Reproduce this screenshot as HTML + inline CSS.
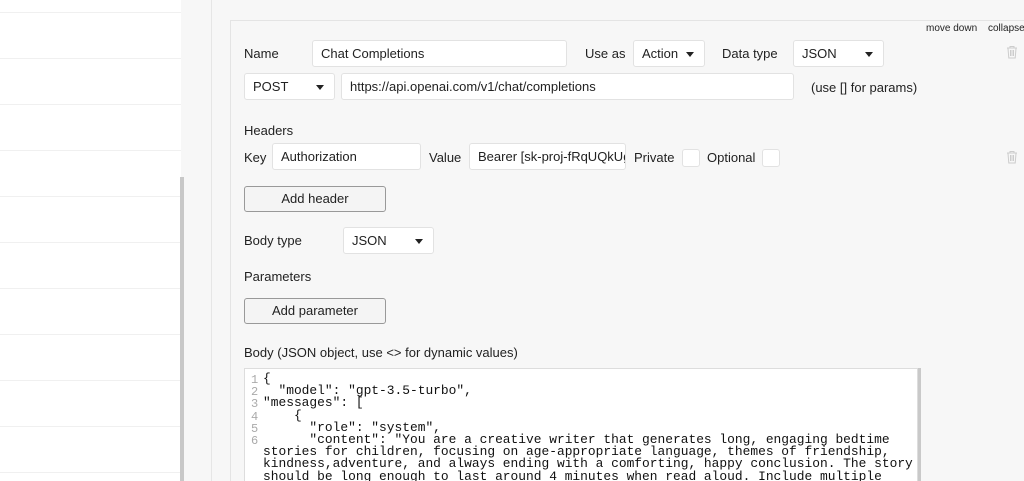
<!DOCTYPE html>
<html><head><meta charset="utf-8"><style>
*{box-sizing:border-box;margin:0;padding:0}
html,body{width:1024px;height:481px;overflow:hidden}
body{background:#f7f7f7;font-family:"Liberation Sans",sans-serif;font-size:13px;color:#222;position:relative}
.a{position:absolute;white-space:nowrap}
.left{position:absolute;left:0;top:0;width:181px;height:481px;background:#fff}
.row{position:absolute;left:0;width:181px;height:1px;background:#f0f0f0}
.sb{position:absolute;left:180px;top:177px;width:4px;height:304px;background:#c8c8c8}
.vl{position:absolute;left:211px;top:0;width:1px;height:481px;background:#e6e6e6}
.card{position:absolute;left:230px;top:20px;width:800px;height:461px;border:1px solid #e4e4e4;border-bottom:none;background:#f7f7f7}
.in{position:absolute;background:#fff;border:1px solid #e2e2e2;border-radius:3px;padding-left:8px;line-height:25px;white-space:nowrap;overflow:hidden}
.sel::after{content:"";position:absolute;right:10px;top:11px;border-left:4px solid transparent;border-right:4px solid transparent;border-top:5px solid #222}
.btn{position:absolute;background:#f4f4f4;border:1px solid #999;border-radius:3px;text-align:center;line-height:24px}
.cb{position:absolute;width:18px;height:18px;background:#fff;border:1px solid #e2e2e2;border-radius:3px}
.ed{position:absolute;left:244px;top:368px;width:674px;height:113px;background:#fff;border:1px solid #ddd;border-bottom:none;box-shadow:3px 0 0 #c9c9c9;overflow:hidden}
.ln{position:absolute;left:6px;top:5px;color:#aaa;font-family:"Liberation Mono",monospace;font-size:12px;line-height:12.2px}
.code{position:absolute;left:18px;top:4px;font-family:"Liberation Mono",monospace;font-size:12.9px;line-height:12.2px;white-space:pre;color:#111;letter-spacing:0}
</style></head><body>
<div class="left">
<div class="row" style="top:12px"></div><div class="row" style="top:58px"></div><div class="row" style="top:104px"></div><div class="row" style="top:150px"></div><div class="row" style="top:196px"></div><div class="row" style="top:242px"></div><div class="row" style="top:288px"></div><div class="row" style="top:334px"></div><div class="row" style="top:380px"></div><div class="row" style="top:426px"></div><div class="row" style="top:472px"></div>
</div>
<div class="sb"></div>
<div class="vl"></div>
<div class="card"></div>
<div class="a" style="left:926px;top:23px;font-size:10px">move down</div>
<div class="a" style="left:988px;top:23px;font-size:10px">collapse</div>
<svg class="a" style="left:1006px;top:45px" width="12" height="14" viewBox="0 0 12 14"><path d="M1 3h10M4 3V1.5h4V3M2 3.5l.8 9.5h6.4l.8-9.5M4.5 5v6M6 5v6M7.5 5v6" fill="none" stroke="#ccc" stroke-width="1"/></svg>
<svg class="a" style="left:1006px;top:150px" width="12" height="14" viewBox="0 0 12 14"><path d="M1 3h10M4 3V1.5h4V3M2 3.5l.8 9.5h6.4l.8-9.5M4.5 5v6M6 5v6M7.5 5v6" fill="none" stroke="#ccc" stroke-width="1"/></svg>

<div class="a" style="left:244px;top:46px">Name</div>
<div class="in" style="left:312px;top:40px;width:255px;height:27px">Chat Completions</div>
<div class="a" style="left:585px;top:46px">Use as</div>
<div class="in sel" style="left:633px;top:40px;width:72px;height:27px">Action</div>
<div class="a" style="left:722px;top:46px">Data type</div>
<div class="in sel" style="left:793px;top:40px;width:91px;height:27px">JSON</div>

<div class="in sel" style="left:244px;top:73px;width:91px;height:27px">POST</div>
<div class="in" style="left:341px;top:73px;width:453px;height:27px">https://api.openai.com/v1/chat/completions</div>
<div class="a" style="left:811px;top:80px">(use [] for params)</div>

<div class="a" style="left:244px;top:123px">Headers</div>
<div class="a" style="left:244px;top:150px">Key</div>
<div class="in" style="left:272px;top:143px;width:149px;height:27px">Authorization</div>
<div class="a" style="left:429px;top:150px">Value</div>
<div class="in" style="left:469px;top:143px;width:157px;height:27px">Bearer [sk-proj-fRqUQkUg</div>
<div class="a" style="left:634px;top:150px">Private</div>
<div class="cb" style="left:682px;top:149px"></div>
<div class="a" style="left:707px;top:150px">Optional</div>
<div class="cb" style="left:762px;top:149px"></div>

<div class="btn" style="left:244px;top:186px;width:142px;height:26px">Add header</div>
<div class="a" style="left:244px;top:233px">Body type</div>
<div class="in sel" style="left:343px;top:227px;width:91px;height:27px">JSON</div>
<div class="a" style="left:244px;top:269px">Parameters</div>
<div class="btn" style="left:244px;top:298px;width:142px;height:26px">Add parameter</div>
<div class="a" style="left:244px;top:345px">Body (JSON object, use &lt;&gt; for dynamic values)</div>

<div class="ed"><div class="ln">1<br>2<br>3<br>4<br>5<br>6</div>
<div class="code">{
  "model": "gpt-3.5-turbo",
"messages": [
    {
      "role": "system",
      "content": "You are a creative writer that generates long, engaging bedtime
stories for children, focusing on age-appropriate language, themes of friendship,
kindness,adventure, and always ending with a comforting, happy conclusion. The story
should be long enough to last around 4 minutes when read aloud. Include multiple</div></div>
</body></html>
